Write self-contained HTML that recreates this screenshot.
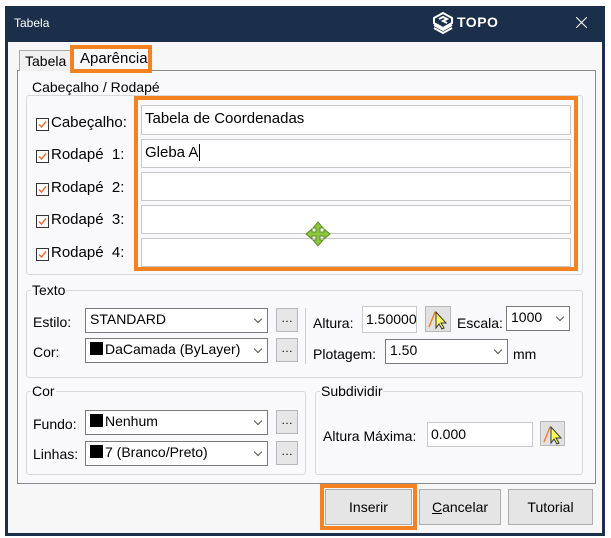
<!DOCTYPE html>
<html><head><meta charset="utf-8"><style>
*{box-sizing:border-box;margin:0;padding:0}
body{width:611px;height:538px;background:#fff;position:relative;overflow:hidden;font-family:"Liberation Sans",sans-serif;font-size:14px;color:#000}
.a{position:absolute}
.win{left:5px;top:6px;width:600px;height:530px;background:#1b2f4b}
.cont{left:8px;top:42px;width:594px;height:491px;background:#f7f7f8}
.panel{left:17px;top:70px;width:579px;height:414px;border:1px solid #8a8a8a;background:#f9f9fc}
.grp{border:1px solid #d8d8d8;border-radius:3px}
.gl{background:#f9f9fc;padding:0 1px;font-size:14px}
.inp{background:#fff;border:1px solid #c9c9c9}
.cb{width:13px;height:13px;border:1px solid #333;background:#fff}
.lbl{font-size:15px}
.combo{background:#fff;border:1px solid #7a7a7a;font-size:14px;padding:2px 4px}
.combo:after{content:"";position:absolute;right:6px;top:7px;width:5px;height:5px;border-right:1px solid #555;border-bottom:1px solid #555;transform:rotate(45deg)}
.dots{background:#e6e6e6;border:1px solid #b8b8b8;text-align:center;font-size:12px;line-height:18px}
.sq{display:inline-block;width:13px;height:13px;background:#000;vertical-align:-1px;margin-right:2px}
.btn{background:#e5e5e5;border:1px solid #adadad;text-align:center;font-size:14px;line-height:35px}
.or{border:4px solid #f58220}
.pick{background:#e1e1e1;border:1px solid #b8b8b8}
</style></head><body>
<div class="a win"></div>
<div class="a" style="left:14px;top:16px;color:#fff;font-size:12px">Tabela</div>
<svg class="a" style="left:431px;top:11px" width="24" height="24" viewBox="0 0 24 24"><path d="M12 2 L21 7 L21 12 L12 17 L3 12 L3 7Z" fill="none" stroke="#fff" stroke-width="2"/><path d="M3 14 L12 19 L21 14 M3 17 L12 22 L21 17" fill="none" stroke="#fff" stroke-width="2"/><path d="M8 8 L12 6 L16 8 L12 10 L16 12" fill="none" stroke="#fff" stroke-width="2"/></svg>
<div class="a" style="left:457px;top:14px;color:#fff;font-weight:bold;font-size:14px;letter-spacing:0.5px">TOPO</div>
<svg class="a" style="left:576px;top:17px" width="11" height="11"><path d="M0 0 L11 11 M11 0 L0 11" stroke="#fff" stroke-width="1"/></svg>
<div class="a cont"></div>
<div class="a panel"></div>
<div class="a" style="left:19px;top:50px;width:53px;height:21px;border:1px solid #aaa;border-bottom:none;background:#f0f0f0;font-size:14px;padding:2px 0 0 5px">Tabela</div>
<div class="a" style="left:72px;top:48px;width:78px;height:23px;background:#f9f9fc;font-size:15px;padding:2px 0 0 8px">Aparência</div>
<div class="a or" style="left:70px;top:45px;width:82px;height:28px"></div>

<div class="a grp" style="left:26px;top:95px;width:557px;height:180px"></div>
<div class="a gl" style="left:31px;top:79px">Cabeçalho / Rodapé</div>
<svg width="0" height="0"><defs><symbol id="ck" viewBox="0 0 13 13"><rect x="0.5" y="0.5" width="12" height="12" fill="#fff" stroke="#333"/><path d="M3 6.5 L5.5 9 L10 3.5" fill="none" stroke="#e8703a" stroke-width="1.5"/></symbol></defs></svg>
<svg class="a" style="left:36px;top:118px" width="13" height="13"><use href="#ck"/></svg><div class="a lbl" style="left:51px;top:114px">Cabeçalho:</div>
<svg class="a" style="left:36px;top:150px" width="13" height="13"><use href="#ck"/></svg><div class="a lbl" style="left:51px;top:146px">Rodapé&nbsp; 1:</div>
<svg class="a" style="left:36px;top:183px" width="13" height="13"><use href="#ck"/></svg><div class="a lbl" style="left:51px;top:179px">Rodapé&nbsp; 2:</div>
<svg class="a" style="left:36px;top:215px" width="13" height="13"><use href="#ck"/></svg><div class="a lbl" style="left:51px;top:211px">Rodapé&nbsp; 3:</div>
<svg class="a" style="left:36px;top:248px" width="13" height="13"><use href="#ck"/></svg><div class="a lbl" style="left:51px;top:244px">Rodapé&nbsp; 4:</div>
<div class="a inp lbl" style="left:141px;top:105px;width:430px;height:30px;padding:4px 3px">Tabela de Coordenadas</div>
<div class="a inp lbl" style="left:141px;top:139px;width:430px;height:29px;padding:4px 3px">Gleba A<span style="border-left:1px solid #000;margin-left:1px"></span></div>
<div class="a inp" style="left:141px;top:172px;width:430px;height:29px"></div>
<div class="a inp" style="left:141px;top:205px;width:430px;height:29px"></div>
<div class="a inp" style="left:141px;top:238px;width:430px;height:29px"></div>
<div class="a or" style="left:134px;top:96px;width:444px;height:175px"></div>
<svg class="a" style="left:305px;top:221px" width="26" height="26" viewBox="0 0 26 26"><path d="M13 1 L18 7 L15 7 L15 11 L19 11 L19 8 L25 13 L19 18 L19 15 L15 15 L15 19 L18 19 L13 25 L8 19 L11 19 L11 15 L7 15 L7 18 L1 13 L7 8 L7 11 L11 11 L11 7 L8 7Z" fill="#8cc63f" stroke="#5a8f20" stroke-width="1"/></svg>

<div class="a grp" style="left:26px;top:290px;width:557px;height:88px"></div>
<div class="a gl" style="left:31px;top:282px">Texto</div>
<div class="a" style="left:33px;top:314px">Estilo:</div>
<div class="a combo" style="left:85px;top:308px;width:183px;height:25px">STANDARD</div>
<div class="a dots" style="left:276px;top:308px;width:22px;height:24px">…</div>
<div class="a" style="left:33px;top:344px">Cor:</div>
<div class="a combo" style="left:85px;top:338px;width:183px;height:25px"><span class="sq"></span>DaCamada (ByLayer)</div>
<div class="a dots" style="left:276px;top:338px;width:22px;height:24px">…</div>
<div class="a" style="left:305px;top:308px;width:1px;height:56px;background:#ccc"></div>
<div class="a" style="left:313px;top:315px">Altura:</div>
<div class="a inp" style="left:362px;top:306px;width:55px;height:27px;padding:4px 3px;overflow:hidden;white-space:nowrap">1.50000</div>
<div class="a pick" style="left:425px;top:306px;width:26px;height:26px"><svg width="24" height="24"><path d="M3 20 L9 5" stroke="#f58220" stroke-width="1.5"/><path d="M10 5 L10 21 L13 17 L16 22 L18 21 L15 16 L20 16Z" fill="#ff5" stroke="#333"/></svg></div>
<div class="a" style="left:457px;top:315px">Escala:</div>
<div class="a combo" style="left:506px;top:306px;width:64px;height:25px">1000</div>
<div class="a" style="left:313px;top:346px">Plotagem:</div>
<div class="a combo" style="left:385px;top:339px;width:123px;height:25px">1.50</div>
<div class="a" style="left:513px;top:346px">mm</div>

<div class="a grp" style="left:26px;top:391px;width:280px;height:84px"></div>
<div class="a gl" style="left:31px;top:383px">Cor</div>
<div class="a" style="left:33px;top:416px">Fundo:</div>
<div class="a combo" style="left:85px;top:410px;width:183px;height:25px"><span class="sq"></span>Nenhum</div>
<div class="a dots" style="left:276px;top:410px;width:22px;height:24px">…</div>
<div class="a" style="left:33px;top:446px">Linhas:</div>
<div class="a combo" style="left:85px;top:441px;width:183px;height:25px"><span class="sq"></span>7 (Branco/Preto)</div>
<div class="a dots" style="left:276px;top:441px;width:22px;height:24px">…</div>

<div class="a grp" style="left:315px;top:391px;width:268px;height:84px"></div>
<div class="a gl" style="left:320px;top:383px">Subdividir</div>
<div class="a" style="left:323px;top:428px">Altura Máxima:</div>
<div class="a inp" style="left:427px;top:422px;width:106px;height:25px;padding:3px 3px">0.000</div>
<div class="a pick" style="left:540px;top:421px;width:25px;height:25px"><svg width="24" height="24"><path d="M3 20 L9 5" stroke="#f58220" stroke-width="1.5"/><path d="M10 5 L10 21 L13 17 L16 22 L18 21 L15 16 L20 16Z" fill="#ff5" stroke="#333"/></svg></div>

<div class="a btn" style="left:325px;top:489px;width:87px;height:36px">Inserir</div>
<div class="a or" style="left:320px;top:484px;width:97px;height:46px"></div>
<div class="a btn" style="left:419px;top:489px;width:82px;height:36px"><u>C</u>ancelar</div>
<div class="a btn" style="left:508px;top:489px;width:85px;height:36px">Tutorial</div>
</body></html>
